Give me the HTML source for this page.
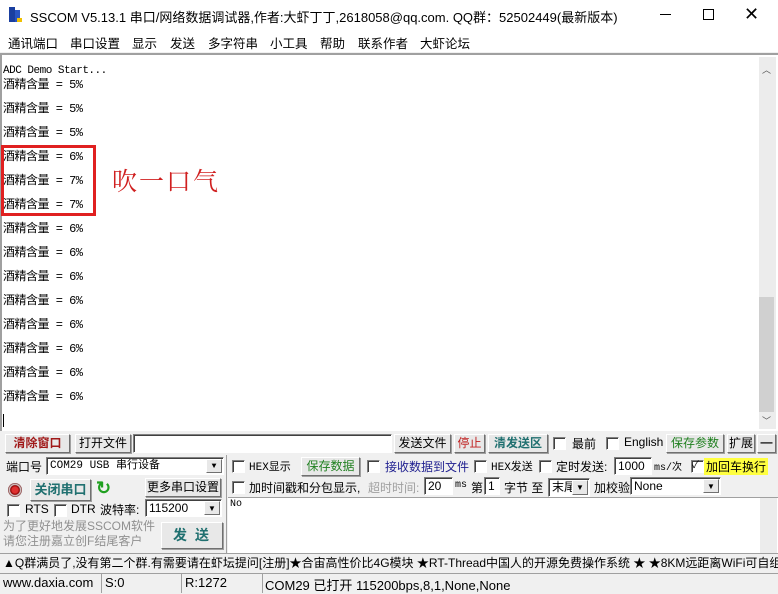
<!DOCTYPE html>
<html><head><meta charset="utf-8"><style>
*{margin:0;padding:0;box-sizing:border-box}
body{width:778px;height:593px;background:#f0f0f0;font-family:"Liberation Sans","Noto Sans CJK SC",sans-serif;font-size:12px;color:#000;position:relative;overflow:hidden}
.a{position:absolute;white-space:nowrap}
.btn{position:absolute;background:#e8e8e8;border:1px solid;border-color:#fff #707070 #707070 #fff;box-shadow:1px 1px 0 #a0a0a0;text-align:center;font-size:12px;white-space:nowrap}
.in{position:absolute;background:#fff;border:1px solid;border-color:#808080 #fff #fff #808080;box-shadow:inset 1px 1px 0 #404040;font-size:12px;padding-left:3px;white-space:nowrap}
.cb{position:absolute;width:13px;height:13px;background:#fff;border:1px solid;border-color:#808080 #fff #fff #808080;box-shadow:inset 1px 1px 0 #404040}
.dd{position:absolute;right:1px;top:1px;bottom:1px;width:16px;background:#e8e8e8;border:1px solid;border-color:#fff #707070 #707070 #fff;font-size:8px;text-align:center;line-height:14px}
.m{font-family:"Liberation Mono","Noto Sans CJK SC",monospace}
.ln{position:absolute;left:3px;font-size:12px;font-family:"Liberation Mono","Noto Sans CJK SC",monospace;letter-spacing:-0.5px}
</style></head><body>
<div class="a" style="left:0;top:0;width:778px;height:30px;background:#fff"></div>
<div class="a" style="left:9px;top:7px;width:6px;height:15px;background:#1a3fa0"></div>
<div class="a" style="left:15px;top:10px;width:5px;height:12px;background:#2a55c0"></div>
<div class="a" style="left:17px;top:18px;width:5px;height:4px;background:#f0c000"></div>
<div class="a" style="left:30px;top:7px;font-size:13px">SSCOM V5.13.1 串口/网络数据调试器,作者:大虾丁丁,2618058@qq.com. QQ群：52502449(最新版本)</div>
<div class="a" style="left:660px;top:14px;width:11px;height:1px;background:#000"></div>
<div class="a" style="left:703px;top:9px;width:11px;height:11px;border:1px solid #000"></div>
<div class="a" style="left:744px;top:4px;font-size:18px;font-weight:100">✕</div>
<div class="a" style="left:0;top:30px;width:778px;height:22px;background:#fff"></div>
<div class="a" style="left:8px;top:33px;font-size:12.5px">通讯端口</div>
<div class="a" style="left:70px;top:33px;font-size:12.5px">串口设置</div>
<div class="a" style="left:132px;top:33px;font-size:12.5px">显示</div>
<div class="a" style="left:170px;top:33px;font-size:12.5px">发送</div>
<div class="a" style="left:208px;top:33px;font-size:12.5px">多字符串</div>
<div class="a" style="left:270px;top:33px;font-size:12.5px">小工具</div>
<div class="a" style="left:320px;top:33px;font-size:12.5px">帮助</div>
<div class="a" style="left:358px;top:33px;font-size:12.5px">联系作者</div>
<div class="a" style="left:420px;top:33px;font-size:12.5px">大虾论坛</div>
<div class="a" style="left:0;top:53px;width:778px;height:378px;background:#fff;border-top:2px solid #a0a0a0;border-left:2px solid #a0a0a0"></div>
<div class="a" style="left:759px;top:57px;width:17px;height:372px;background:#ececec"></div>
<div class="a" style="left:762px;top:63px;font-size:9px;color:#555">︿</div>
<div class="a" style="left:759px;top:297px;width:15px;height:115px;background:#d0d0d0"></div>
<div class="a" style="left:762px;top:414px;font-size:9px;color:#555">﹀</div>
<div class="ln" style="top:65px;font-size:11px">ADC Demo Start...</div>
<div class="ln" style="top:75px">酒精含量 = 5%</div>
<div class="ln" style="top:99px">酒精含量 = 5%</div>
<div class="ln" style="top:123px">酒精含量 = 5%</div>
<div class="ln" style="top:147px">酒精含量 = 6%</div>
<div class="ln" style="top:171px">酒精含量 = 7%</div>
<div class="ln" style="top:195px">酒精含量 = 7%</div>
<div class="ln" style="top:219px">酒精含量 = 6%</div>
<div class="ln" style="top:243px">酒精含量 = 6%</div>
<div class="ln" style="top:267px">酒精含量 = 6%</div>
<div class="ln" style="top:291px">酒精含量 = 6%</div>
<div class="ln" style="top:315px">酒精含量 = 6%</div>
<div class="ln" style="top:339px">酒精含量 = 6%</div>
<div class="ln" style="top:363px">酒精含量 = 6%</div>
<div class="ln" style="top:387px">酒精含量 = 6%</div>
<div class="a" style="left:3px;top:414px;width:1px;height:13px;background:#000"></div>
<div class="a" style="left:1px;top:145px;width:95px;height:71px;border:3px solid #e02020"></div>
<div class="a" style="left:112px;top:162px;font-size:25px;color:#d02020;font-family:'Noto Serif CJK SC',serif;letter-spacing:2px">吹一口气</div>

<div class="btn" style="left:5px;top:434px;width:65px;height:19px;color:#a01818;font-weight:bold;line-height:17px">清除窗口</div>
<div class="btn" style="left:75px;top:434px;width:56px;height:19px;line-height:17px">打开文件</div>
<div class="in" style="left:133px;top:434px;width:259px;height:19px"></div>
<div class="btn" style="left:394px;top:434px;width:57px;height:19px;line-height:17px">发送文件</div>
<div class="btn" style="left:454px;top:434px;width:31px;height:19px;line-height:17px;color:#c02020">停止</div>
<div class="btn" style="left:488px;top:434px;width:60px;height:19px;line-height:17px;color:#207070;font-weight:bold">清发送区</div>
<div class="cb" style="left:553px;top:437px"></div><div class="a" style="left:572px;top:435px">最前</div>
<div class="cb" style="left:606px;top:437px"></div><div class="a" style="left:624px;top:435px">English</div>
<div class="btn" style="left:666px;top:434px;width:58px;height:19px;line-height:17px;color:#208020">保存参数</div>
<div class="btn" style="left:727px;top:434px;width:28px;height:19px;line-height:17px">扩展</div>
<div class="btn" style="left:757px;top:434px;width:19px;height:19px;line-height:15px;font-weight:bold">—</div>

<div class="a" style="left:6px;top:458px">端口号</div>
<div class="in m" style="left:46px;top:457px;width:178px;height:18px;font-size:11px;line-height:16px">COM29 USB 串行设备<div class="dd">▼</div></div>
<div class="a" style="left:226px;top:455px;width:1px;height:110px;background:#a0a0a0"></div>
<div class="cb" style="left:232px;top:460px"></div><div class="a m" style="left:249px;top:458px;font-size:11px">HEX显示</div>
<div class="btn" style="left:301px;top:457px;width:59px;height:19px;line-height:17px;color:#208020">保存数据</div>
<div class="cb" style="left:367px;top:460px"></div><div class="a" style="left:385px;top:458px;color:#202090">接收数据到文件</div>
<div class="cb" style="left:474px;top:460px"></div><div class="a m" style="left:491px;top:458px;font-size:11px">HEX发送</div>
<div class="cb" style="left:539px;top:460px"></div><div class="a" style="left:556px;top:458px">定时发送:</div>
<div class="in" style="left:614px;top:457px;width:38px;height:18px;line-height:16px">1000</div>
<div class="a m" style="left:654px;top:458px;font-size:10px">ms/次</div>
<div class="cb" style="left:691px;top:460px;font-size:10px;line-height:10px">✓</div>
<div class="a" style="left:704px;top:458px;background:#ffff40;padding:0 2px">加回车换行</div>

<div class="a" style="left:8px;top:483px;width:14px;height:14px;border-radius:50%;background:radial-gradient(circle,#e03030 30%,#800 45%,#ddd 55%,#600 75%)"></div>
<div class="btn" style="left:30px;top:479px;width:61px;height:22px;line-height:20px;color:#207070;font-weight:bold;font-size:13px">关闭串口</div>
<div class="a" style="left:96px;top:478px;font-size:18px;color:#20a020;font-weight:bold">↻</div>
<div class="btn" style="left:145px;top:478px;width:76px;height:19px;line-height:17px">更多串口设置</div>
<div class="cb" style="left:232px;top:481px"></div><div class="a" style="left:249px;top:479px">加时间戳和分包显示,</div>
<div class="a" style="left:368px;top:479px;color:#a0a0a0">超时时间:</div>
<div class="in" style="left:424px;top:477px;width:29px;height:18px;line-height:16px">20</div>
<div class="a m" style="left:455px;top:480px;font-size:10px">ms</div>
<div class="a" style="left:471px;top:479px">第</div>
<div class="in" style="left:484px;top:477px;width:16px;height:18px;line-height:16px">1</div>
<div class="a" style="left:504px;top:479px">字节 至</div>
<div class="in" style="left:548px;top:478px;width:42px;height:19px;line-height:17px">末尾<div class="dd">▼</div></div>
<div class="a" style="left:594px;top:479px">加校验</div>
<div class="in" style="left:630px;top:477px;width:91px;height:18px;line-height:16px">None<div class="dd">▼</div></div>

<div class="cb" style="left:7px;top:504px"></div><div class="a" style="left:25px;top:502px">RTS</div>
<div class="cb" style="left:54px;top:504px"></div><div class="a" style="left:71px;top:502px">DTR</div>
<div class="a" style="left:100px;top:501px">波特率:</div>
<div class="in" style="left:145px;top:499px;width:77px;height:18px;line-height:16px">115200<div class="dd">▼</div></div>
<div class="a" style="left:228px;top:497px;width:550px;height:57px;background:#fff;border-top:1px solid #a0a0a0"></div>
<div class="a m" style="left:230px;top:499px;font-size:10px">No</div>
<div class="a" style="left:760px;top:498px;width:17px;height:55px;background:#ececec"></div>

<div class="a" style="left:3px;top:519px;color:#909090;font-size:12px;line-height:15px">为了更好地发展SSCOM软件<br>请您注册嘉立创F结尾客户</div>
<div class="btn" style="left:161px;top:522px;width:62px;height:27px;line-height:25px;color:#207070;font-weight:bold;font-size:14px;letter-spacing:8px;padding-left:6px">发送</div>

<div class="a" style="left:0;top:553px;width:778px;height:18px;border-top:1px solid #a0a0a0;background:#f0f0f0"></div>
<div class="a" style="left:3px;top:554px;font-size:12px">▲Q群满员了,没有第二个群.有需要请在虾坛提问[注册]★合宙高性价比4G模块 ★RT-Thread中国人的开源免费操作系统 ★ ★8KM远距离WiFi可自组网</div>
<div class="a" style="left:0;top:573px;width:778px;height:20px;border-top:1px solid #a0a0a0"></div>
<div class="a" style="left:101px;top:574px;width:1px;height:19px;background:#a0a0a0"></div>
<div class="a" style="left:181px;top:574px;width:1px;height:19px;background:#a0a0a0"></div>
<div class="a" style="left:262px;top:574px;width:1px;height:19px;background:#a0a0a0"></div>
<div class="a" style="left:3px;top:575px;font-size:13px">www.daxia.com</div>
<div class="a" style="left:105px;top:575px;font-size:13px">S:0</div>
<div class="a" style="left:185px;top:575px;font-size:13px">R:1272</div>
<div class="a" style="left:265px;top:575px;font-size:13px">COM29 已打开  115200bps,8,1,None,None</div>
</body></html>
